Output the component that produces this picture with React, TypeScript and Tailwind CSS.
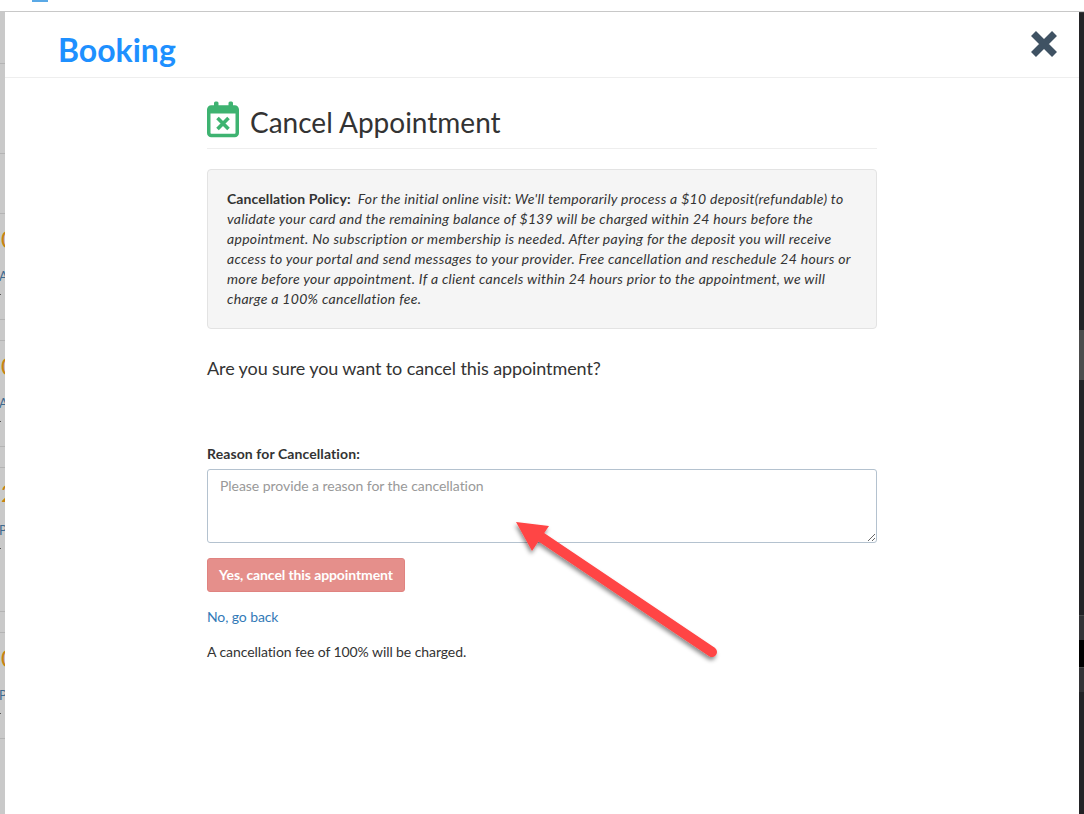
import React from "react"

const SideRow = ({ height, digit, sub }: { height: string; digit?: string; sub?: string }) => (
    <div className={`${height} border-b border-[#b4b4b4] relative`}>
        {digit && <span className="absolute top-[13px] left-[1px] text-[24px] leading-none text-[#c8830f]">{digit}</span>}
        {sub && <span className="absolute top-[56px] left-[-1px] text-[13px] leading-none text-[#3f6a8f]">{sub}</span>}
        {sub && <span className="absolute top-[80px] left-0 w-[1px] h-[1px] bg-[#555]" />}
    </div>
)

const CalendarIcon = () => (
    <svg width="33" height="37" viewBox="0 0 33 37" className="shrink-0">
        <rect x="7" y="0.5" width="4.5" height="8" rx="1.5" fill="#3eb371" />
        <rect x="21.5" y="0.5" width="4.5" height="8" rx="1.5" fill="#3eb371" />
        <rect x="1.75" y="6" width="28.5" height="28.5" rx="2.5" fill="#fff" stroke="#3eb371" strokeWidth="3.5" />
        <rect x="1.75" y="6" width="28.5" height="6.5" rx="1.5" fill="#3eb371" />
        <path d="M10.5 17 L21.5 28 M21.5 17 L10.5 28" stroke="#3eb371" strokeWidth="3.6" />
    </svg>
)

export default function App() {
    return (
        <div className="relative w-[1084px] h-[814px] overflow-hidden bg-white flex flex-col font-['Lato',sans-serif] text-[14px] text-[#333] [font-variant-ligatures:none]">
            <div className="h-[12px] shrink-0 border-b border-[#c8c8c8] pl-[32px]">
                <div className="w-[16px] h-[2px] bg-[#5aa9e6]" />
            </div>

            <div className="flex flex-1 min-h-0">
                <div className="w-[5px] shrink-0 bg-[#c9c9c9] overflow-hidden">
                    <SideRow height="h-[52px]" />
                    <SideRow height="h-[90px]" />
                    <SideRow height="h-[60px]" />
                    <SideRow height="h-[106px]" digit="0" sub="A" />
                    <SideRow height="h-[21px]" />
                    <SideRow height="h-[106px]" digit="0" sub="A" />
                    <SideRow height="h-[21px]" />
                    <SideRow height="h-[144px]" digit="2" sub="P" />
                    <SideRow height="h-[21px]" />
                    <SideRow height="h-[106px]" digit="0" sub="P" />
                </div>

                <div className="flex-1 min-w-0 flex flex-col">
                    <div className="h-[66px] shrink-0 border-b border-[#eeeeee] flex items-center justify-between pl-[53px] pr-[21px]">
                        <h1 className="text-[32px] font-bold leading-none text-[#1e90ff] mt-[11px]">Booking</h1>
                        <svg width="28" height="28" viewBox="0 0 28 28" className="mb-[1px]">
                            <path d="M3.5 3.5 L24.5 24.5 M24.5 3.5 L3.5 24.5" stroke="#3f5263" strokeWidth="7" />
                        </svg>
                    </div>

                    <div className="w-[670px] ml-[202px] flex flex-col">
                        <div className="h-[71px] border-b border-[#eeeeee] flex items-center gap-[10px] pt-[12px]">
                            <CalendarIcon />
                            <h2 className="text-[28px] leading-none text-[#333] font-normal mt-[6px]">Cancel Appointment</h2>
                        </div>

                        <div className="mt-[20px] h-[160px] bg-[#f5f5f5] border border-[#e3e3e3] rounded-[4px] px-[19px] py-[19px] leading-[20px]">
                            <strong className="font-bold tracking-[0.1px]">Cancellation Policy:</strong>
                            <em className="italic tracking-[0.3px]">
                                {"\u00a0 "}For the initial online visit: We'll temporarily process a $10 deposit(refundable) to validate your card and the remaining balance of $139 will be charged within 24 hours before the appointment. No subscription or membership is needed. After paying for the deposit you will receive access to your portal and send messages to your provider. Free cancellation and reschedule 24 hours or more before your appointment. If a client cancels within 24 hours prior to the appointment, we will charge a 100% cancellation fee.
                            </em>
                        </div>

                        <p className="mt-[27px] text-[18px] leading-[25px] tracking-[-0.1px]">Are you sure you want to cancel this appointment?</p>

                        <label className="mt-[63px] font-bold leading-[20px] tracking-[0.1px]">Reason for Cancellation:</label>
                        <textarea
                            className="mt-[5px] h-[74px] w-full border border-[#b4c2cf] rounded-[3px] px-[12px] py-[6px] leading-[20px] tracking-[-0.05px] placeholder:text-[#999] outline-none"
                            placeholder="Please provide a reason for the cancellation"
                        />

                        <button className="mt-[15px] w-[198px] h-[34px] pb-[2px] bg-[#e58f8b] border border-[#e08380] rounded-[3px] text-white font-bold tracking-[-0.1px]">Yes, cancel this appointment</button>

                        <a className="mt-[15px] leading-[20px] text-[#337ab7] tracking-[-0.1px]">No, go back</a>
                        <p className="mt-[15px] leading-[20px] tracking-[-0.08px]">A cancellation fee of 100% will be charged.</p>
                    </div>
                </div>

                <div className="w-[5px] shrink-0 bg-[#232326] flex flex-col">
                    <div className="h-[318px] border-t border-[#3a3a3c]" />
                    <div className="h-[50px] bg-[#4c4c4c]" />
                    <div className="h-[235px]" />
                    <div className="h-[25px] bg-[#333336] border-t border-[#4a4a4a]" />
                    <div className="h-[27px] bg-black" />
                    <div className="h-[25px] bg-[#333336] border-t border-[#4a4a4a]" />
                </div>
            </div>

            {/* red annotation arrow */}
            <svg className="absolute left-[505px] top-[512px] pointer-events-none" width="225" height="160" viewBox="505 512 225 160">
                <defs>
                    <filter id="arrowShadow" x="-10%" y="-10%" width="120%" height="120%">
                        <feDropShadow dx="-1" dy="3" stdDeviation="2" floodColor="#000" floodOpacity="0.45" />
                    </filter>
                </defs>
                <g filter="url(#arrowShadow)">
                    <line x1="712" y1="652" x2="538" y2="535" stroke="#ff4444" strokeWidth="10" strokeLinecap="round" />
                    <polygon points="516,522 549,526 532,551" fill="#ff4444" />
                </g>
            </svg>
        </div>
    )
}
